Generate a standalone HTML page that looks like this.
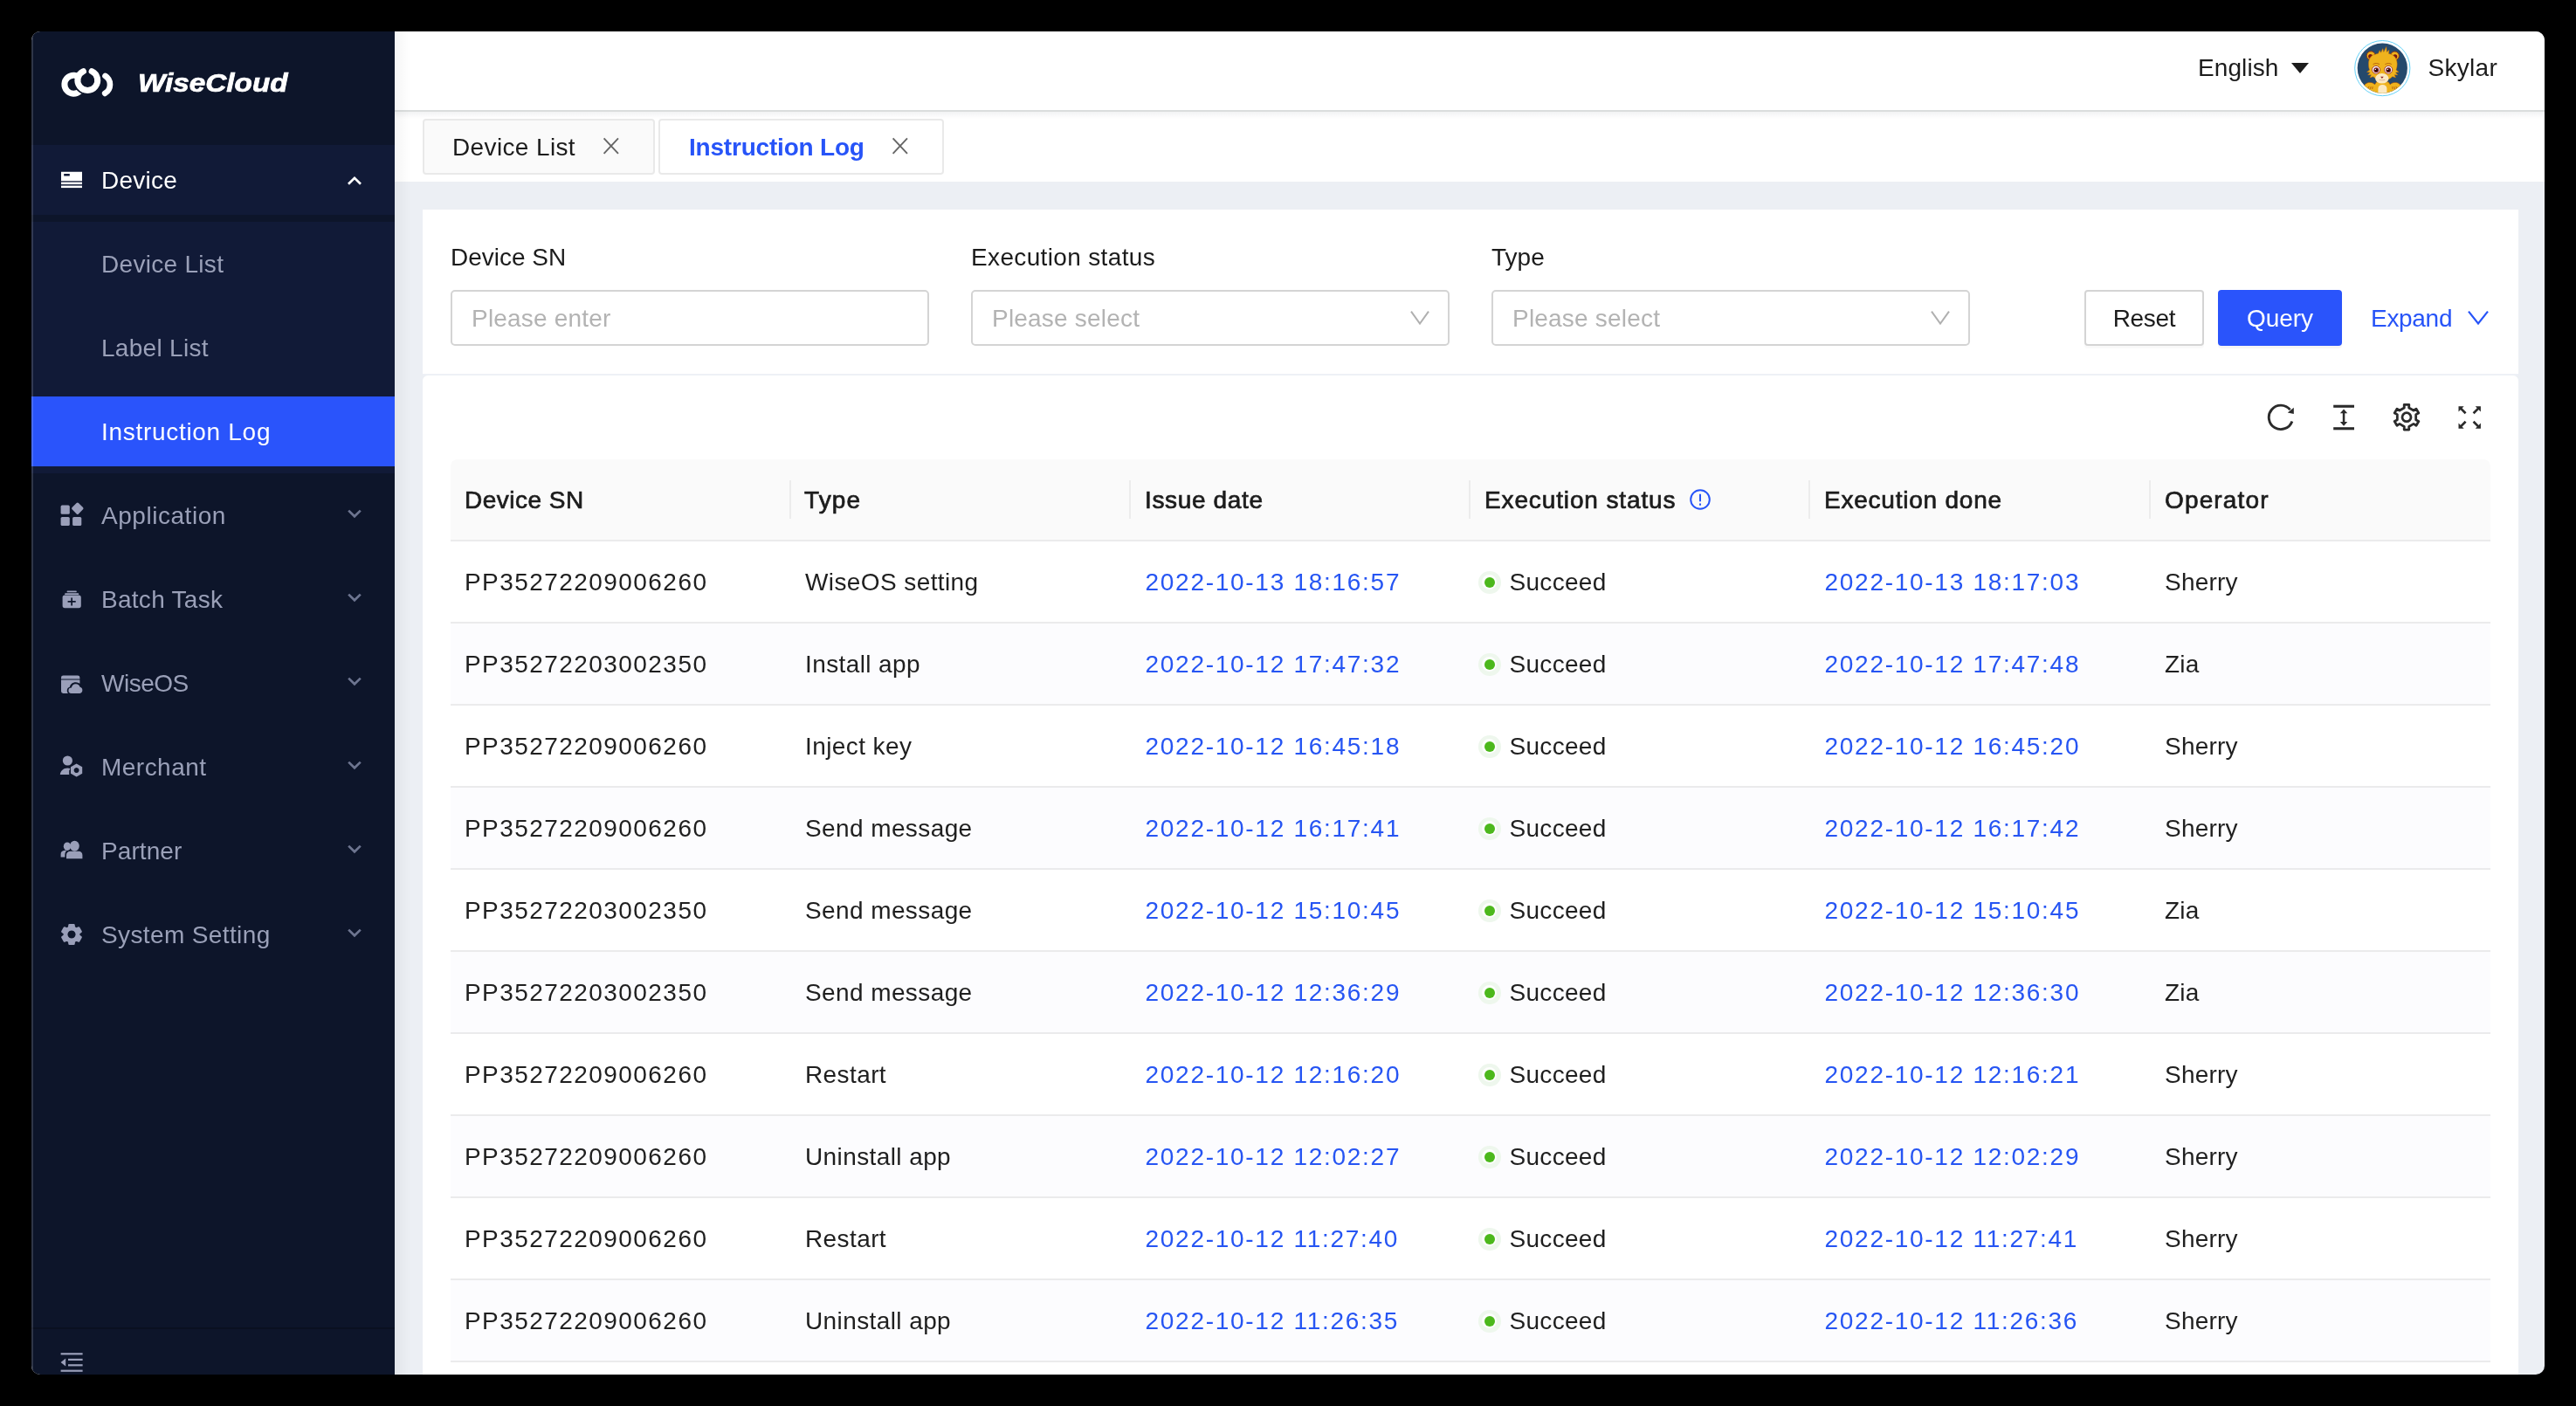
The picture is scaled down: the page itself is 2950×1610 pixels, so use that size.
<!DOCTYPE html>
<html>
<head>
<meta charset="utf-8">
<title>WiseCloud - Instruction Log</title>
<style>
*{box-sizing:border-box;margin:0;padding:0}
html,body{width:2950px;height:1610px;background:#000;overflow:hidden}
body{font-family:"Liberation Sans",sans-serif;font-size:28px;color:#1f1f1f;position:relative}
#win{position:absolute;left:36px;top:36px;width:2878px;height:1538px;overflow:hidden;border-radius:10px;background:#eceff4}
#pg{position:absolute;left:-36px;top:-36px;width:2950px;height:1610px;will-change:transform}
.abs{position:absolute}
.t{position:absolute;white-space:nowrap;height:40px;line-height:40px;margin-top:1px}
/* sidebar */
#side{position:absolute;left:36px;top:36px;width:416px;height:1538px;background:#0d152a}
.mi{color:#9aa0b8}
.chev{position:absolute;left:396px;width:20px;height:16px}
/* main */
#hdr{position:absolute;left:452px;top:36px;width:2462px;height:90px;background:#fff}
#tabs{position:absolute;left:452px;top:126px;width:2462px;height:82px;background:#fff}
.tab{position:absolute;top:136px;height:64px;border:2px solid #e9e9e9;border-radius:4px}
.card{position:absolute;background:#fff}
.inp{position:absolute;top:332px;height:64px;border:2px solid #d4d4d4;border-radius:5px;background:#fff}
.ph{color:#b3b3b3}
.lab{color:#1c1c1c}
/* table */
.th{color:#1c1c1c;-webkit-text-stroke:.7px #1c1c1c;letter-spacing:.5px}
.sep{position:absolute;top:550px;width:2px;height:44px;background:#ececec}
.row{position:absolute;left:516px;width:2336px;height:94px;border-bottom:2px solid #ebebec}
.row.z{background:#fcfcfe}
.c{position:absolute;top:27px;height:40px;line-height:40px;white-space:nowrap}
.c1{left:16px;letter-spacing:1.44px}
.c2{left:406px;letter-spacing:.4px}
.c3{left:795.500px;color:#2655f3;letter-spacing:1.72px}
.c4{left:1212.500px;letter-spacing:.3px}
.c5{left:1573.500px;color:#2655f3;letter-spacing:1.72px}
.c6{left:1963px;letter-spacing:.2px}
.dot{position:absolute;left:1177.300px;top:34.300px;width:25.400px;height:25.400px;border-radius:50%;background:#eef7ed}
.dot:before{content:"";position:absolute;left:4.200px;top:4.200px;width:17px;height:17px;border-radius:50%;background:#fdfefd}
.dot:after{content:"";position:absolute;left:6.700px;top:6.700px;width:12px;height:12px;border-radius:50%;background:#4cb81c}
</style>
</head>
<body>
<div id="win"><div id="pg">


<!-- MAIN -->
<div id="tabs"></div>
<div class="tab" style="left:484px;width:266px;background:#fafafa"></div>
<div class="tab" style="left:754px;width:327px;background:#fff"></div>
<div class="t" style="left:518px;top:148px;letter-spacing:.37px;color:#1c1c1c">Device List</div>
<div class="t" style="left:789px;top:148px;font-weight:bold;color:#2754f8;letter-spacing:-.2px">Instruction Log</div>
<svg class="abs" style="left:690px;top:157px" width="20" height="20" viewBox="0 0 20 20" stroke="#666" stroke-width="1.900" fill="none"><path d="M1.600 1.400L18 18.800M18 1.400L1.600 18.800"/></svg>
<svg class="abs" style="left:1021px;top:157px" width="20" height="20" viewBox="0 0 20 20" stroke="#666" stroke-width="1.900" fill="none"><path d="M1.600 1.400L18 18.800M18 1.400L1.600 18.800"/></svg>

<div id="hdr"></div>
<div class="abs" style="left:452px;top:126px;width:2462px;height:2px;background:#dadddd"></div>
<div class="abs" style="left:452px;top:128px;width:2462px;height:8px;background:linear-gradient(180deg,rgba(0,20,40,.05),rgba(0,20,40,0))"></div>
<div class="t" style="left:2517px;top:57px;color:#1c1c1c;letter-spacing:.1px">English</div>
<svg class="abs" style="left:2624px;top:72px" width="20" height="12" viewBox="0 0 20 12" fill="#1c1c1c"><path d="M0 0h20L10 12z"/></svg>
<div class="t" style="left:2780.500px;top:57px;color:#1c1c1c;letter-spacing:.3px">Skylar</div>
<svg class="abs" style="left:2688px;top:38px" width="80" height="80" viewBox="0 0 80 80">
<defs><clipPath id="avc"><circle cx="40.3" cy="40.1" r="28.600"/></clipPath></defs>
<circle cx="40.3" cy="40.1" r="31.600" fill="#fff" stroke="#5ccff7" stroke-width=".95"/>
<circle cx="40.3" cy="40.1" r="28.600" fill="#25496c"/>
<g clip-path="url(#avc)">
<path d="M19 75V62c0-3 3-5.600 7-5.600c2.600 0 4.600 1 5.600 2.400l2-3h13.600l2 3c1-1.400 3-2.400 5.600-2.400c4 0 7 2.600 7 5.600v13z" fill="#efb31d" stroke="#a8520e" stroke-width=".6"/>
<path d="M35.400 70v-6.500c0-2.600 2-4.400 5-4.400s5 1.800 5 4.400V70z" fill="#fbe9c3"/>
<path d="M23.500 63.500l1.600-2.600M26 64.200l1.200-3M28.600 64l.6-2.800M57.300 63.500l-1.600-2.600M54.800 64.200l-1.200-3M52.200 64l-.6-2.800" stroke="#a8520e" stroke-width=".8" fill="none"/>
<circle cx="27.200" cy="25.800" r="5" fill="#efb31d" stroke="#8a2a10" stroke-width=".9"/><circle cx="26.600" cy="26.400" r="2.500" fill="#7a1812"/>
<circle cx="54.400" cy="26" r="5" fill="#efb31d" stroke="#8a2a10" stroke-width=".9"/><circle cx="54.800" cy="26.800" r="2.500" fill="#7a1812"/>
<path d="M31.500 24.600c1.400-.8 2.600-1.200 4-1.400l1.700-3.600l1.300 2.600l2.300-4.600l1 3.800l3-6l.6 6.200l2.600-2.400l-.4 4.200c1.600.3 2.800.7 4 1.300c3.600 1.800 5.600 5.800 5.600 10.400c0 3-.4 5-1.200 7l3.200 2.400l-3.800.6l2.600 2.800l-3.800-.2l1.400 3.200l-3.800-1.200c-2.800 3-6.600 4.400-11 4.400s-8.200-1.400-11-4.400l-3.800 1.200l1.400-3.200l-3.800.2l2.600-2.800l-3.800-.6l3.200-2.400c-.8-2-1.200-4-1.200-7c0-4.600 2-8.600 5.600-10.400z" fill="#efb31d" stroke="#b8650e" stroke-width=".5"/>
<path d="M29.600 35.600c2-1.400 5-1.400 7.400 0M43.400 35.600c2.400-1.400 5.400-1.400 7.400 0" stroke="#b8650e" stroke-width="1" fill="none"/>
<ellipse cx="39.800" cy="51.800" rx="7.700" ry="5.800" fill="#fbe9c3"/>
<circle cx="33" cy="41.900" r="4.500" fill="#fff" stroke="#9a3434" stroke-width=".9"/><circle cx="33.200" cy="42.200" r="2.900" fill="#7b1c1c"/><circle cx="33.200" cy="42.200" r="1.500" fill="#140808"/><circle cx="32.400" cy="41.400" r=".7" fill="#fff"/>
<circle cx="47.200" cy="41.900" r="4.500" fill="#fff" stroke="#9a3434" stroke-width=".9"/><circle cx="47.200" cy="42.200" r="2.900" fill="#7b1c1c"/><circle cx="47.200" cy="42.200" r="1.500" fill="#140808"/><circle cx="46.400" cy="41.400" r=".7" fill="#fff"/>
<path d="M38.100 49.700h3.600l-1.800 2.400z" fill="#8a1f2a"/>
<path d="M36.600 53.400c2.200.5 4.400.5 6.600 0" stroke="#c4776a" stroke-width=".5" fill="none"/>
</g>
</svg>

<div class="abs" style="left:452px;top:36px;width:18px;height:1538px;background:linear-gradient(90deg,rgba(0,0,0,.04),rgba(0,0,0,0))"></div>
<!-- search card -->
<div class="card" style="left:484px;top:240px;width:2400px;height:188px"></div>
<div class="abs" style="left:484px;top:428px;width:2400px;height:2px;background:#eef1f6"></div>
<div class="card" style="left:484px;top:430px;width:2400px;height:1160px;border-radius:6px 6px 0 0"></div>

<div class="t lab" style="left:516px;top:274px">Device SN</div>
<div class="t lab" style="left:1112px;top:274px;letter-spacing:.35px">Execution status</div>
<div class="t lab" style="left:1708px;top:274px">Type</div>
<div class="inp" style="left:516px;width:548px"></div>
<div class="inp" style="left:1112px;width:548px"></div>
<div class="inp" style="left:1708px;width:548px"></div>
<div class="t ph" style="left:540px;top:344px;letter-spacing:.2px">Please enter</div>
<div class="t ph" style="left:1136px;top:344px;letter-spacing:.2px">Please select</div>
<div class="t ph" style="left:1732px;top:344px;letter-spacing:.2px">Please select</div>
<svg class="abs" style="left:1614px;top:355px" width="24" height="18" viewBox="0 0 24 18" fill="none" stroke="#b0b0b0" stroke-width="2"><path d="M2 1.600L12 15.600L22 1.600"/></svg>
<svg class="abs" style="left:2210px;top:355px" width="24" height="18" viewBox="0 0 24 18" fill="none" stroke="#b0b0b0" stroke-width="2"><path d="M2 1.600L12 15.600L22 1.600"/></svg>

<div class="abs" style="left:2387px;top:332px;width:137px;height:64px;border:2px solid #d4d4d4;border-radius:4px;background:#fff;box-shadow:0 3px 1px rgba(0,0,0,.025)"></div>
<div class="t" style="left:2387px;top:344px;width:137px;text-align:center;color:#1c1c1c;letter-spacing:-.3px">Reset</div>
<div class="abs" style="left:2540px;top:332px;width:142px;height:64px;border-radius:4px;background:#2a54fb;box-shadow:0 3px 1px rgba(0,0,0,.04)"></div>
<div class="t" style="left:2540px;top:344px;width:142px;text-align:center;color:#fff">Query</div>
<div class="t" style="left:2715px;top:344px;color:#2754f8;letter-spacing:-.3px">Expand</div>
<svg class="abs" style="left:2825px;top:355px" width="26" height="19" viewBox="0 0 26 19" fill="none" stroke="#2754f8" stroke-width="2.200"><path d="M2 1.600L13 15.500L24 1.600"/></svg>

<!-- toolbar icons -->
<svg class="abs" style="left:2596px;top:462px" width="32" height="32" viewBox="0 0 32 32" fill="none" stroke="#2b2b2b" stroke-width="2.900">
<path d="M28.870 20.490A13.700 13.700 0 1 1 26.600 7.200"/><path d="M30.800 4.700v7.400l-7-1.700z" fill="#2b2b2b" stroke="none"/></svg>
<svg class="abs" style="left:2668px;top:462px" width="32" height="32" viewBox="0 0 32 32" fill="#2b2b2b">
<rect x="4.200" y="1.700" width="23.800" height="3.100"/><rect x="4.200" y="27.200" width="23.800" height="3.100"/><rect x="14.800" y="10" width="2.500" height="12"/><path d="M16.050 6.400l4.200 4.800h-8.400zM16.050 25.800l4.200-4.800h-8.400z"/></svg>
<svg class="abs" style="left:2740px;top:462px" width="32" height="32" viewBox="-16 -15.700 32 32" fill="none" stroke="#2b2b2b" stroke-width="2.800" stroke-linejoin="round">
<path d="M-2.69 -10.77L-2.79 -14.33L2.79 -14.33L2.69 -10.77L7.98 -7.71L11.02 -9.58L13.80 -4.75L10.67 -3.06L10.67 3.06L13.80 4.75L11.02 9.58L7.98 7.71L2.69 10.77L2.79 14.33L-2.79 14.33L-2.69 10.77L-7.98 7.71L-11.02 9.58L-13.80 4.75L-10.67 3.06L-10.67 -3.06L-13.80 -4.75L-11.02 -9.58L-7.98 -7.71z"/><circle cx="0" cy="0" r="5"/></svg>
<svg class="abs" style="left:2812px;top:462px" width="32" height="32" viewBox="0 0 32 32" fill="#2b2b2b" stroke="#2b2b2b" stroke-width="2.700">
<path d="M11.600 11.200L6 5.600M20.600 11.200l5.600-5.600M11.600 20.800L6 26.400M20.600 20.800l5.600 5.600" fill="none"/>
<path d="M3.500 3.200h6.200l-6.200 6.200zM28.900 3.200v6.200l-6.200-6.200zM3.500 28.800v-6.200l6.200 6.200zM28.900 28.800h-6.200l6.200-6.200z" stroke="none"/></svg>

<!-- table -->
<div class="abs" style="left:516px;top:526px;width:2336px;height:94px;background:#fafafa;border-bottom:2px solid #ebebec;border-radius:8px 8px 0 0"></div>
<div class="sep" style="left:904px"></div><div class="sep" style="left:1293px"></div><div class="sep" style="left:1682px"></div><div class="sep" style="left:2071px"></div><div class="sep" style="left:2461px"></div>
<div class="t th" style="left:532px;top:552px">Device SN</div>
<div class="t th" style="left:921px;top:552px;letter-spacing:1.1px">Type</div>
<div class="t th" style="left:1311px;top:552px;letter-spacing:.65px">Issue date</div>
<div class="t th" style="left:1700px;top:552px;letter-spacing:.87px">Execution status</div>
<div class="t th" style="left:2089px;top:552px;letter-spacing:.77px">Execution done</div>
<div class="t th" style="left:2479px;top:552px;letter-spacing:1.15px">Operator</div>
<svg class="abs" style="left:1934px;top:559px" width="26" height="26" viewBox="0 0 26 26" fill="none" stroke="#2754f8" stroke-width="2"><circle cx="13" cy="13" r="10.800"/><path d="M13 6.800v8.400M13 17.600v2.200"/></svg>
<div class="row" style="top:620px"><div class="c c1">PP35272209006260</div><div class="c c2">WiseOS setting</div><div class="c c3">2022-10-13 18:16:57</div><div class="dot"></div><div class="c c4">Succeed</div><div class="c c5">2022-10-13 18:17:03</div><div class="c c6">Sherry</div></div>
<div class="row z" style="top:714px"><div class="c c1">PP35272203002350</div><div class="c c2">Install app</div><div class="c c3">2022-10-12 17:47:32</div><div class="dot"></div><div class="c c4">Succeed</div><div class="c c5">2022-10-12 17:47:48</div><div class="c c6">Zia</div></div>
<div class="row" style="top:808px"><div class="c c1">PP35272209006260</div><div class="c c2">Inject key</div><div class="c c3">2022-10-12 16:45:18</div><div class="dot"></div><div class="c c4">Succeed</div><div class="c c5">2022-10-12 16:45:20</div><div class="c c6">Sherry</div></div>
<div class="row z" style="top:902px"><div class="c c1">PP35272209006260</div><div class="c c2">Send message</div><div class="c c3">2022-10-12 16:17:41</div><div class="dot"></div><div class="c c4">Succeed</div><div class="c c5">2022-10-12 16:17:42</div><div class="c c6">Sherry</div></div>
<div class="row" style="top:996px"><div class="c c1">PP35272203002350</div><div class="c c2">Send message</div><div class="c c3">2022-10-12 15:10:45</div><div class="dot"></div><div class="c c4">Succeed</div><div class="c c5">2022-10-12 15:10:45</div><div class="c c6">Zia</div></div>
<div class="row z" style="top:1090px"><div class="c c1">PP35272203002350</div><div class="c c2">Send message</div><div class="c c3">2022-10-12 12:36:29</div><div class="dot"></div><div class="c c4">Succeed</div><div class="c c5">2022-10-12 12:36:30</div><div class="c c6">Zia</div></div>
<div class="row" style="top:1184px"><div class="c c1">PP35272209006260</div><div class="c c2">Restart</div><div class="c c3">2022-10-12 12:16:20</div><div class="dot"></div><div class="c c4">Succeed</div><div class="c c5">2022-10-12 12:16:21</div><div class="c c6">Sherry</div></div>
<div class="row z" style="top:1278px"><div class="c c1">PP35272209006260</div><div class="c c2">Uninstall app</div><div class="c c3">2022-10-12 12:02:27</div><div class="dot"></div><div class="c c4">Succeed</div><div class="c c5">2022-10-12 12:02:29</div><div class="c c6">Sherry</div></div>
<div class="row" style="top:1372px"><div class="c c1">PP35272209006260</div><div class="c c2">Restart</div><div class="c c3">2022-10-12 11:27:40</div><div class="dot"></div><div class="c c4">Succeed</div><div class="c c5">2022-10-12 11:27:41</div><div class="c c6">Sherry</div></div>
<div class="row z" style="top:1466px"><div class="c c1">PP35272209006260</div><div class="c c2">Uninstall app</div><div class="c c3">2022-10-12 11:26:35</div><div class="dot"></div><div class="c c4">Succeed</div><div class="c c5">2022-10-12 11:26:36</div><div class="c c6">Sherry</div></div>
<div class="row" style="top:1560px"></div>


<!-- SIDEBAR -->
<div id="side"></div>
<div class="abs" style="left:36px;top:166px;width:416px;height:80px;background:#111a37"></div>
<div class="abs" style="left:36px;top:254px;width:416px;height:288px;background:#111a37"></div>
<div class="abs" style="left:36px;top:454px;width:416px;height:80px;background:#2a54fb"></div>
<div class="abs" style="left:36px;top:1520px;width:416px;height:2px;background:#0a1021"></div>

<!-- logo -->
<svg class="abs" style="left:60px;top:66px" width="80" height="56" viewBox="0 0 80 56" fill="none" stroke="#fff" stroke-width="7" stroke-linecap="round">
<path d="M31.43 38.50A10.5 10.5 0 1 1 32.20 23.67"/>
<path d="M36.03 36.57A11.4 11.4 0 0 1 29.01 24.41" stroke="#0d152a" stroke-width="10.600" stroke-linecap="butt"/>
<circle cx="40.3" cy="26" r="9" fill="#0d152a" stroke="none"/>
<path d="M45.12 15.67A11.4 11.4 0 1 1 35.48 15.67"/>
<path d="M60.50 20.88A11.7 11.7 0 0 1 60.15 40.93" stroke-width="6.600"/>
</svg>
<div class="t" style="left:158px;top:74px;font-size:29px;font-weight:bold;font-style:italic;color:#fff;-webkit-text-stroke:.7px #fff;transform:scaleX(1.147);transform-origin:0 50%">WiseCloud</div>

<!-- Device -->
<svg class="abs" style="left:70px;top:196px" width="24" height="20" viewBox="0 0 24 20" fill="#fff">
<path d="M0 0.8h24v10.4H0zM3.2 3v2.6h6.6V3z" fill-rule="evenodd"/><rect x="0" y="12.6" width="24" height="2.5"/><rect x="0" y="16.6" width="24" height="2.5"/>
</svg>
<div class="t" style="left:116px;top:186px;color:#fff;letter-spacing:.25px">Device</div>
<svg class="chev" style="top:198px" viewBox="0 0 20 16" fill="none" stroke="#fff" stroke-width="2.7"><path d="M3 12.800L10 5.800l7 7"/></svg>

<div class="t mi" style="left:116px;top:282px;letter-spacing:.3px">Device List</div>
<div class="t mi" style="left:116px;top:378px;letter-spacing:.3px">Label List</div>
<div class="t" style="left:116px;top:474px;color:#fff;letter-spacing:.7px">Instruction Log</div>

<!-- Application -->
<svg class="abs" style="left:68px;top:574px" width="30" height="30" viewBox="0 0 30 30" fill="#9a9fb9">
<rect x="1.6" y="4.6" width="10.2" height="10.2" rx="1.6"/><rect x="1.6" y="17.9" width="10.2" height="10.2" rx="1.6"/><rect x="15.1" y="17.9" width="10.2" height="10.2" rx="1.6"/>
<rect x="15.6" y="3" width="10.4" height="10.4" rx="1.6" transform="rotate(45 20.8 8.2)"/>
</svg>
<div class="t mi" style="left:116px;top:570px;letter-spacing:.54px">Application</div>
<svg class="chev" style="top:582px" viewBox="0 0 20 16" fill="none" stroke="#6d7590" stroke-width="2.7"><path d="M3.200 2.600L10 9.300l6.800-6.700"/></svg>

<!-- Batch Task -->
<svg class="abs" style="left:68px;top:674px" width="28" height="26" viewBox="0 0 28 26" fill="#9a9fb9">
<rect x="8.6" y="2.6" width="11.2" height="1.6" rx=".6"/><rect x="6.2" y="5.2" width="16" height="1.8" rx=".6"/>
<path d="M6.2 7.4h16a2.6 2.6 0 0 1 2.6 2.6v9.6a2.6 2.6 0 0 1-2.6 2.6h-16a2.6 2.6 0 0 1-2.6-2.6V10a2.6 2.6 0 0 1 2.6-2.6zM13.3 10.4v3.6H9.6v1.7h3.7v3.7H15v-3.7h3.7V14H15v-3.6z" fill-rule="evenodd"/>
</svg>
<div class="t mi" style="left:116px;top:666px;letter-spacing:.28px">Batch Task</div>
<svg class="chev" style="top:678px" viewBox="0 0 20 16" fill="none" stroke="#6d7590" stroke-width="2.7"><path d="M3.200 2.600L10 9.300l6.800-6.700"/></svg>

<!-- WiseOS -->
<svg class="abs" style="left:68px;top:770px" width="30" height="28" viewBox="0 0 30 28" fill="#9a9fb9">
<path d="M4.4 3.6h16.6a2.4 2.4 0 0 1 2.4 2.4v1.4H2V6a2.4 2.4 0 0 1 2.4-2.4z"/>
<path d="M2 8.6h21.4v4.2a7 7 0 0 0-4.8-1.6c-3.4 0-6 2.2-6.6 5.2a4.6 4.6 0 0 0-3.2 4.4c0 1.2.4 2.4 1.2 3.2H4.4A2.4 2.4 0 0 1 2 21.600z"/>
<path d="M13.600 24a3.300 3.300 0 0 1 .3-6.600a5 5 0 0 1 9.700-.6a3.700 3.700 0 0 1-.2 7.200z"/>
</svg>
<div class="t mi" style="left:116px;top:762px;letter-spacing:-.5px">WiseOS</div>
<svg class="chev" style="top:774px" viewBox="0 0 20 16" fill="none" stroke="#6d7590" stroke-width="2.7"><path d="M3.200 2.600L10 9.300l6.800-6.700"/></svg>

<!-- Merchant -->
<svg class="abs" style="left:66px;top:862px" width="32" height="30" viewBox="0 0 32 30" fill="#9a9fb9">
<circle cx="11.4" cy="9" r="5.6"/>
<path d="M2.800 25c.6-4.400 3.600-7.600 8.600-7.600c1.200 0 2.200.2 3.200.6l-1.400 2.400v5.200l-.2-.6z"/>
<path d="M21.600 12.400l6.600 3.800v7.600l-6.600 3.800l-6.600-3.800v-7.600zM21.600 17a3 3 0 1 0 .001 0z" fill-rule="evenodd"/>
</svg>
<div class="t mi" style="left:116px;top:858px;letter-spacing:.47px">Merchant</div>
<svg class="chev" style="top:870px" viewBox="0 0 20 16" fill="none" stroke="#6d7590" stroke-width="2.7"><path d="M3.200 2.600L10 9.300l6.800-6.700"/></svg>

<!-- Partner -->
<svg class="abs" style="left:68px;top:960px" width="30" height="26" viewBox="0 0 30 26" fill="#9a9fb9">
<ellipse cx="9" cy="9.200" rx="4.200" ry="4.800"/>
<path d="M1.600 21.400v-3.400c0-2.400 1.800-4 4.400-4.200h2.600c-1.400 1.200-2.200 2.800-2.200 4.800v2.800z"/>
<ellipse cx="17.400" cy="8.800" rx="5.400" ry="6"/>
<path d="M8 23.200v-4.200c0-2.600 2-4.200 4.600-4.200h9.400c2.600 0 4.400 1.600 4.400 4.200v4.200z"/>
</svg>
<div class="t mi" style="left:116px;top:954px;letter-spacing:.08px">Partner</div>
<svg class="chev" style="top:966px" viewBox="0 0 20 16" fill="none" stroke="#6d7590" stroke-width="2.7"><path d="M3.200 2.600L10 9.300l6.800-6.700"/></svg>

<!-- System Setting -->
<svg class="abs" style="left:68px;top:1056px" width="28" height="28" viewBox="-14 -14 28 28" fill="#9a9fb9">
<path fill-rule="evenodd" stroke="#9a9fb9" stroke-width="2.4" stroke-linejoin="round" d="M-2.87 -7.89L-2.52 -10.91L2.52 -10.91L2.87 -7.89L5.40 -6.43L8.19 -7.64L10.71 -3.27L8.27 -1.46L8.27 1.46L10.71 3.27L8.19 7.64L5.40 6.43L2.87 7.89L2.52 10.91L-2.52 10.91L-2.87 7.89L-5.40 6.43L-8.19 7.64L-10.71 3.27L-8.27 1.46L-8.27 -1.46L-10.71 -3.27L-8.19 -7.64L-5.40 -6.43zM0 -5.8a5.8 5.8 0 1 0 .001 0z"/>
</svg>
<div class="t mi" style="left:116px;top:1050px;letter-spacing:.38px">System Setting</div>
<svg class="chev" style="top:1062px" viewBox="0 0 20 16" fill="none" stroke="#6d7590" stroke-width="2.7"><path d="M3.200 2.600L10 9.300l6.800-6.700"/></svg>

<div class="abs" style="left:36px;top:36px;width:2px;height:1538px;background:rgba(255,255,255,.14)"></div>
<!-- collapse -->
<svg class="abs" style="left:68px;top:1546px" width="28" height="26" viewBox="0 0 28 26" fill="#9a9fb9">
<rect x="1.600" y="3.200" width="25" height="2.200"/><rect x="10" y="9.800" width="16.600" height="2.200"/><rect x="10" y="16.200" width="16.600" height="2.200"/><rect x="1.600" y="22.600" width="25" height="2.200"/>
<path d="M7.200 9.600v8.800L1.600 14z"/>
</svg>

</div></div>
</body>
</html>
